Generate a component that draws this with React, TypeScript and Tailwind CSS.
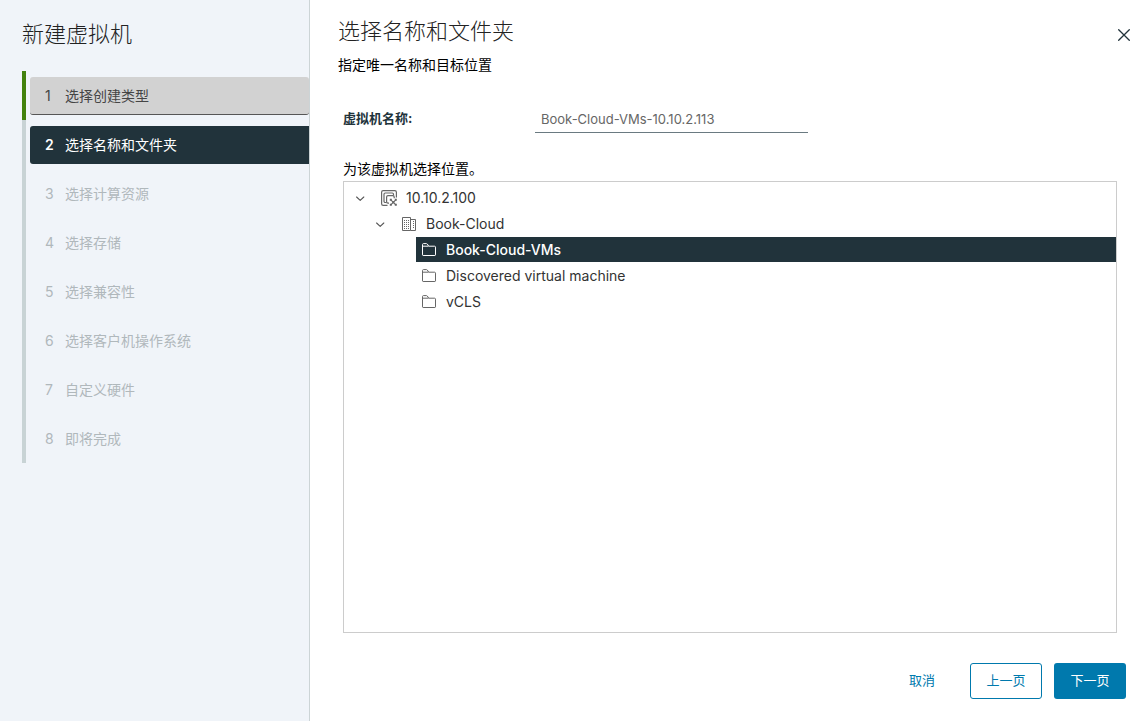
import React, { useState } from 'react'
import clsx from 'clsx'

const steps = [
  '选择创建类型',
  '选择名称和文件夹',
  '选择计算资源',
  '选择存储',
  '选择兼容性',
  '选择客户机操作系统',
  '自定义硬件',
  '即将完成',
]

const CURRENT_STEP = 1

const CloseIcon = () => (
  <svg viewBox="0 0 12 12" className="size-3" fill="none" stroke="currentColor" strokeWidth="1.3" strokeLinecap="round">
    <path d="M0.7 0.7 11.3 11.3M11.3 0.7 0.7 11.3" />
  </svg>
)

const CaretIcon = () => (
  <svg viewBox="0 0 16 16" className="size-4" fill="none" stroke="currentColor" strokeWidth="1.1" strokeLinecap="round" strokeLinejoin="round">
    <path d="M4.6 7 8.2 10.4 11.8 7" />
  </svg>
)

const VCenterIcon = () => (
  <svg viewBox="0 0 16 16" className="size-4 shrink-0" fill="none" stroke="currentColor" strokeWidth="1.2">
    <path d="M6.5 15.4H2.2C1.3 15.4.6 14.7.6 13.8V2.2C.6 1.3 1.3.6 2.2.6h11.6c.9 0 1.6.7 1.6 1.6v5.3" />
    <path d="M5.5 12.5H4.2c-.7 0-1.2-.5-1.2-1.2V4.2C3 3.5 3.5 3 4.2 3h7.1c.7 0 1.2.5 1.2 1.2v1.3" />
    <path d="M8 13.2H7c-.8 0-1.4-.6-1.4-1.4V7c0-.8.6-1.4 1.4-1.4h4.8c.8 0 1.4.6 1.4 1.4v1.2" />
    <path d="m9.8 9.8 5 5M14.8 9.8l-5 5" strokeWidth="1.1" />
    <path d="M8.8 8.8h2v2h-2zM13.8 8.8h2v2h-2zM8.8 13.8h2v2h-2zM13.8 13.8h2v2h-2zM11.3 11.3h2v2h-2z" fill="currentColor" stroke="none" />
  </svg>
)

const DatacenterIcon = () => (
  <svg viewBox="0 0 16 16" className="size-4 shrink-0" fill="none" stroke="currentColor">
    <path d="M1.5 14.5V1.5h8v13zM9.5 3.5h5v11h-5" />
    <path d="M3 4.5h5M3 6.5h5M3 8.5h5M3 10.5h5M3 12.5h5" strokeDasharray="1 1" />
    <path d="M12 5.5h1M12 7.5h1M12 9.5h1M12 11.5h1" />
  </svg>
)

const FolderIcon = () => (
  <svg viewBox="0 0 16 16" className="size-4 shrink-0" fill="none" stroke="currentColor" strokeLinejoin="round">
    <path d="M1.5 12.9V2.5c0-.5.4-.9.9-.9h3.1c.3 0 .6.1.8.4l1.4 2.2h5.9c.5 0 .9.4.9.9v7.8c0 .3-.3.6-.6.6H2.1c-.3 0-.6-.3-.6-.6z" />
    <path d="M1.5 4.2h6" />
  </svg>
)

interface TreeNode {
  name: string
  icon: React.FC
  children?: TreeNode[]
}

const inventory: TreeNode = {
  name: '10.10.2.100',
  icon: VCenterIcon,
  children: [
    {
      name: 'Book-Cloud',
      icon: DatacenterIcon,
      children: [
        { name: 'Book-Cloud-VMs', icon: FolderIcon },
        { name: 'Discovered virtual machine', icon: FolderIcon },
        { name: 'vCLS', icon: FolderIcon },
      ],
    },
  ],
}

interface TreeItemProps {
  node: TreeNode
  selected: string
  onSelect: (name: string) => void
}

const TreeItem: React.FC<TreeItemProps> = ({ node, selected, onSelect }) => {
  const [open, setOpen] = useState(true)
  const Icon = node.icon
  const active = node.name === selected

  return (
    <li role="treeitem" aria-selected={active} aria-expanded={node.children ? open : undefined} className="flex flex-col gap-px">
      <div className="flex h-[25px] items-center">
        <div className="flex w-6 shrink-0">
          {node.children && (
            <button type="button" aria-label={`展开 ${node.name}`} onClick={() => setOpen(!open)} className="text-[#565656]">
              <CaretIcon />
            </button>
          )}
        </div>
        <button
          type="button"
          onClick={() => onSelect(node.name)}
          className={clsx(
            'flex h-full flex-1 items-center gap-[9px] pl-[5px] text-left text-sm',
            active ? 'bg-[#21333b] font-medium text-white' : 'text-[#333]'
          )}
        >
          <span className={active ? 'text-white' : 'text-[#666]'}>
            <Icon />
          </span>
          <span>{node.name}</span>
        </button>
      </div>
      {node.children && open && (
        <ul role="group" className="flex flex-col gap-px pl-5">
          {node.children.map((child) => (
            <TreeItem key={child.name} node={child} selected={selected} onSelect={onSelect} />
          ))}
        </ul>
      )}
    </li>
  )
}

const Sidebar = () => (
  <aside className="w-[310px] shrink-0 border-r border-[#ccd4d6] bg-[#f0f4f9] pl-[22px] pt-[18px]">
    <h1 className="text-[22px] font-light leading-8 text-[#222]">新建虚拟机</h1>
    <ol className="mt-[21px]">
      {steps.map((step, i) => {
        const done = i < CURRENT_STEP
        const current = i === CURRENT_STEP
        return (
          <li
            key={step}
            className={clsx('h-[49px] border-l-4 pb-[5px] pl-1 pt-1.5', done ? 'border-[#42810e]' : 'border-[#c8d3d5]')}
          >
            <button
              type="button"
              disabled={!done && !current}
              aria-current={current ? 'step' : undefined}
              className={clsx(
                'flex h-[38px] w-full items-center pl-[15px] text-left text-sm',
                done && 'rounded-[3px] border-b border-[#565656] bg-[#d2d2d2] text-[#454545]',
                current && 'rounded-l-[3px] bg-[#21333b] text-white',
                !done && !current && 'text-[#b0b8bc]'
              )}
            >
              <span className={clsx('w-5', current && 'font-semibold')}>{i + 1}</span>
              <span>{step}</span>
            </button>
          </li>
        )
      })}
    </ol>
  </aside>
)

export default function App() {
  const [name, setName] = useState('Book-Cloud-VMs-10.10.2.113')
  const [folder, setFolder] = useState('Book-Cloud-VMs')

  return (
    <div className="flex min-h-screen bg-white font-['Inter','Noto_Sans_CJK_SC',sans-serif]">
      <Sidebar />
      <main className="flex min-w-0 flex-1 flex-col pb-[22px] pt-[15px]">
        <header className="flex items-start justify-between pl-7 pr-[18px]">
          <div>
            <h2 className="text-[22px] font-light leading-8 text-[#222]">选择名称和文件夹</h2>
            <p className="mt-2 text-sm text-black">指定唯一名称和目标位置</p>
          </div>
          <button type="button" aria-label="关闭" className="mt-3.5 text-[#21333b]">
            <CloseIcon />
          </button>
        </header>

        <form className="flex flex-1 flex-col pl-[33px] pr-[31px] pt-[30px]">
          <div className="flex h-7 items-center">
            <label htmlFor="vm-name" className="w-48 text-[13px] font-bold text-[#21333b]">
              虚拟机名称:
            </label>
            <input
              id="vm-name"
              type="text"
              value={name}
              onChange={(e) => setName(e.target.value)}
              className="h-7 w-[273px] border-b border-[#6a7a81] px-1.5 text-[13px] text-[#666] outline-none"
            />
          </div>

          <p id="location-label" className="mt-[26px] text-sm text-black">
            为该虚拟机选择位置。
          </p>
          <ul role="tree" aria-labelledby="location-label" className="mt-0.5 flex-1 border border-[#ccc] pl-2 pt-[3px]">
            <TreeItem node={inventory} selected={folder} onSelect={setFolder} />
          </ul>
        </form>

        <footer className="mt-[30px] flex justify-end gap-3 pr-[22px] text-[13px]">
          <button type="button" className="h-9 w-[72px] text-[#0079ad]">
            取消
          </button>
          <button type="button" className="h-9 w-[72px] rounded-[3px] border border-[#0079ad] text-[#0079ad]">
            上一页
          </button>
          <button type="button" className="h-9 w-[72px] rounded-[3px] bg-[#0079ad] text-white">
            下一页
          </button>
        </footer>
      </main>
    </div>
  )
}
